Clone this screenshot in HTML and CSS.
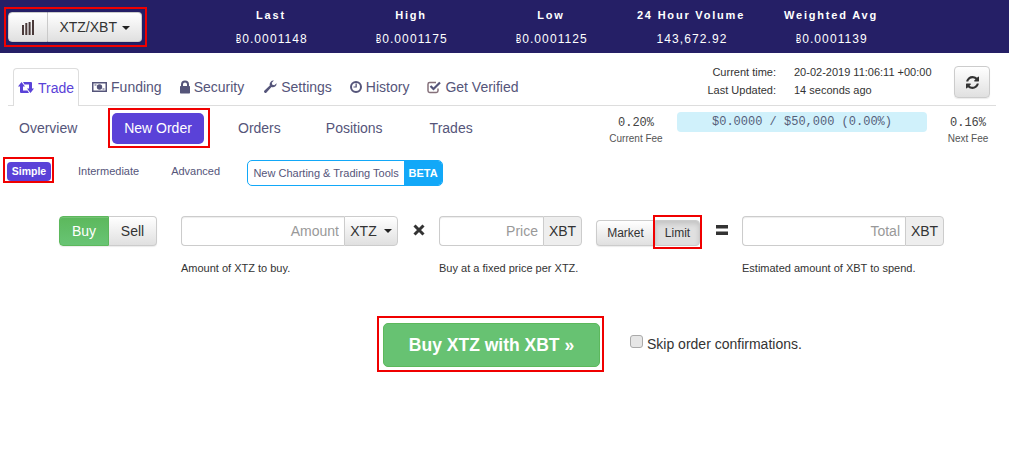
FILE: index.html
```html
<!DOCTYPE html>
<html lang="en">
<head>
  <meta charset="UTF-8" />
  <title>XTZ/XBT Trade</title>
  <link rel="stylesheet" href="styles.css">
</head>
<body>
  <header class="topbar">
    <div class="marked pair-mark">
      <div class="pair-group">
        <button class="btn pair-chart">
          <svg width="12" height="15" viewBox="0 0 12 15"><path d="M0 5h2v10H0zM3.300 3h2v12h-2zM6.600 2h2v13h-2zM10 0h2v15h-2z" fill="#4a3a3a"/></svg>
        </button>
        <button class="btn pair-name">XTZ/XBT <span class="caret"></span></button>
      </div>
    </div>
    <div class="ticker">
      <div class="tick"><div class="tick-label">Last</div><div class="tick-value"><span class="btc">Ƀ</span>0.0001148</div></div>
      <div class="tick"><div class="tick-label">High</div><div class="tick-value"><span class="btc">Ƀ</span>0.0001175</div></div>
      <div class="tick"><div class="tick-label">Low</div><div class="tick-value"><span class="btc">Ƀ</span>0.0001125</div></div>
      <div class="tick"><div class="tick-label">24 Hour Volume</div><div class="tick-value">143,672.92</div></div>
      <div class="tick"><div class="tick-label">Weighted Avg</div><div class="tick-value"><span class="btc">Ƀ</span>0.0001139</div></div>
    </div>
  </header>

  <div class="tabs">
    <a class="tab active">
      <svg width="16" height="13" viewBox="0 0 16 13"><path d="M0 5.500L3.500 1 7 5.500H5v4h4.500l1.500 2.500H3a1 1 0 0 1-1-1V5.500zM16 7.500L12.500 12 9 7.500h2v-4H6.500L5 1h8a1 1 0 0 1 1 1v5.500z" fill="#5a42d8"/></svg>
      Trade
    </a>
    <a class="tab">
      <svg width="15" height="14" viewBox="0 0 15 14"><path fill-rule="evenodd" d="M0 2h15v10H0zM1.500 3.500v7h12v-7zM7.500 4.300a2.700 2.700 0 1 1 0 5.400 2.700 2.700 0 0 1 0-5.400z" fill="#55557a"/><path d="M2.500 4.500h2v1h-2zM10.500 8.500h2v1h-2z" fill="#55557a"/></svg>
      Funding
    </a>
    <a class="tab security">
      <svg width="10" height="14" viewBox="0 0 10 14"><path fill-rule="evenodd" d="M1 6V4.500a4 4 0 0 1 8 0V6h.300a.7.700 0 0 1 .7.700v6a.7.700 0 0 1-.7.700H.700a.7.700 0 0 1-.7-.7v-6A.7.700 0 0 1 .700 6zM3 6h4V4.500a2 2 0 0 0-4 0z" fill="#55557a"/></svg>
      Security
    </a>
    <a class="tab">
      <svg width="13" height="14" viewBox="0 0 13 14"><path d="M12.600 3.200a3.800 3.800 0 0 1-5.100 3.900l-5 5.500a1.400 1.400 0 0 1-2-2l5.300-5.200A3.800 3.800 0 0 1 9.900.600L7.800 2.800l.5 2 2 .5z" fill="#55557a"/></svg>
      Settings
    </a>
    <a class="tab">
      <svg width="12" height="14" viewBox="0 0 12 14"><circle cx="6" cy="7" r="5" fill="none" stroke="#55557a" stroke-width="2"/><path d="M5.500 3.500h1.300v4H3.500V6.500h2z" fill="#55557a"/></svg>
      History
    </a>
    <a class="tab">
      <svg width="14" height="14" viewBox="0 0 14 14"><path d="M11 8.500v2.300A1.700 1.700 0 0 1 9.300 12.500H2.700A1.700 1.700 0 0 1 1 10.800V4.200A1.700 1.700 0 0 1 2.700 2.500H9" fill="none" stroke="#85707a" stroke-width="1.500"/><path d="M3.500 6l3 3 6.500-6.500" fill="none" stroke="#55557a" stroke-width="2.200"/></svg>
      Get Verified
    </a>
    <div class="clock">
      <div class="clock-names"><div>Current time:</div><div>Last Updated:</div></div>
      <div class="clock-values"><div>20-02-2019 11:06:11 +00:00</div><div>14 seconds ago</div></div>
    </div>
    <button class="btn refresh">
      <svg width="13" height="13" viewBox="128 128 1536 1536"><path d="M1639 1056q0 5-1 7-64 268-268 434.500t-478 166.500q-146 0-282.500-55t-243.500-157l-129 129q-19 19-45 19t-45-19-19-45v-448q0-26 19-45t45-19h448q26 0 45 19t19 45-19 45l-137 137q71 66 161 102t187 36q134 0 250-65t186-179q11-17 53-117 8-23 30-23h192q13 0 22.500 9.500t9.500 22.500zm25-800v448q0 26-19 45t-45 19h-448q-26 0-45-19t-19-45 19-45l138-138q-148-137-349-137-134 0-250 65t-186 179q-11 17-53 117-8 23-30 23h-199q-13 0-22.500-9.500t-9.500-22.500v-7q65-268 270-434.500t480-166.500q146 0 284 55.500t245 156.500l130-129q19-19 45-19t45 19 19 45z" fill="#333"/></svg>
    </button>
  </div>

  <div class="subnav">
    <a class="subnav-item overview">Overview</a>
    <div class="marked order-mark"><a class="pill">New Order</a></div>
    <a class="subnav-item orders">Orders</a>
    <a class="subnav-item positions">Positions</a>
    <a class="subnav-item trades">Trades</a>
    <div class="fees">
      <div class="fee"><div class="fee-rate">0.20%</div><div class="fee-name">Current Fee</div></div>
      <div class="fee-bar">$0.0000 / $50,000 (0.00%)</div>
      <div class="fee"><div class="fee-rate">0.16%</div><div class="fee-name">Next Fee</div></div>
    </div>
  </div>

  <div class="modes">
    <div class="marked simple-mark"><a class="mode-pill">Simple</a></div>
    <a class="mode intermediate">Intermediate</a>
    <a class="mode advanced">Advanced</a>
    <a class="beta-link"><span class="beta-text">New Charting &amp; Trading Tools</span><span class="beta-tag">BETA</span></a>
  </div>

  <form class="order-form">
    <div class="side-group">
      <button type="button" class="btn buy">Buy</button>
      <button type="button" class="btn sell">Sell</button>
    </div>
    <div class="field amount-field">
      <div class="input-group">
        <input class="input" placeholder="Amount">
        <span class="addon addon-select">XTZ <span class="caret"></span></span>
      </div>
      <p class="hint">Amount of XTZ to buy.</p>
    </div>
    <div class="operator">
      <svg width="12" height="12" viewBox="0 0 12 12"><path d="M1.500 1.500l9 9M10.500 1.500l-9 9" stroke="#333" stroke-width="3"/></svg>
    </div>
    <div class="field price-field">
      <div class="input-group">
        <input class="input" placeholder="Price">
        <span class="addon">XBT</span>
      </div>
      <p class="hint">Buy at a fixed price per XTZ.</p>
    </div>
    <div class="type-group">
      <button type="button" class="btn market">Market</button>
      <div class="marked limit-mark"><button type="button" class="btn limit">Limit</button></div>
    </div>
    <div class="operator equals">
      <svg width="12" height="12" viewBox="0 0 12 12"><path d="M0 1h12v3.500H0zM0 7.500h12V11H0z" fill="#333"/></svg>
    </div>
    <div class="field total-field">
      <div class="input-group">
        <input class="input" placeholder="Total">
        <span class="addon">XBT</span>
      </div>
      <p class="hint">Estimated amount of XBT to spend.</p>
    </div>
  </form>

  <div class="submit-row">
    <div class="marked submit-mark"><button type="button" class="submit">Buy XTZ with XBT »</button></div>
    <label class="skip"><input type="checkbox"> Skip order confirmations.</label>
  </div>
</body>
</html>
```

FILE: styles.css
```css
* {
  box-sizing: border-box;
}

body {
  margin: 0;
  font-family: "Liberation Sans", Arial, sans-serif;
  font-size: 14px;
  color: #333;
  background: #fff;
}

button, input {
  font-family: inherit;
}

.marked {
  border: 2px solid #f00000;
}

.btn {
  border: 1px solid #ccc;
  color: #333;
  font-size: 14px;
  background: linear-gradient(#fff, #e0e0e0);
  box-shadow: inset 0 1px 0 rgba(255,255,255,.15), 0 1px 1px rgba(0,0,0,.08);
  padding: 0;
}

.caret {
  display: inline-block;
  width: 0;
  height: 0;
  margin-left: 1px;
  vertical-align: middle;
  border-top: 4px solid #222;
  border-left: 4px solid transparent;
  border-right: 4px solid transparent;
}

/* top bar */
.topbar {
  display: flex;
  height: 53px;
  background: #251f66;
  padding: 7px 0 0 4px;
}

.pair-mark {
  width: 143px;
  height: 40px;
  padding: 3px 3px 3px 2px;
}

.pair-group {
  display: flex;
  width: 134px;
  height: 30px;
}

.pair-chart {
  width: 40px;
  border-radius: 4px 0 0 4px;
  display: flex;
  align-items: center;
  justify-content: center;
}

.pair-name {
  flex: 1;
  border-left: 0;
  border-radius: 0 4px 4px 0;
  font-size: 14px;
}

.ticker {
  display: flex;
  margin-left: 54px;
}

.tick {
  width: 140px;
  text-align: center;
  color: #fff;
}

.tick-label {
  font-size: 11px;
  font-weight: bold;
  letter-spacing: 1.8px;
  margin-top: 1px;
  line-height: 14px;
}

.tick-value {
  font-size: 12px;
  letter-spacing: 1.1px;
  margin-top: 10px;
  padding-left: 2px;
  line-height: 14px;
}

.btc {
  display: inline-block;
  width: 6px;
  transform: scaleX(.65);
  transform-origin: left;
}

/* main tabs */
.tabs {
  display: flex;
  align-items: flex-start;
  height: 53px;
  padding: 15px 0 0 8px;
  position: relative;
}

.tabs::after {
  content: "";
  position: absolute;
  left: 8px;
  width: 988px;
  top: 52px;
  border-bottom: 1px solid #ddd;
}

.tab {
  display: flex;
  align-items: center;
  gap: 4px;
  height: 38px;
  padding: 0 5px 0 5px;
  margin-right: 8px;
  color: #55557a;
}

.tab.security {
  margin-right: 10px;
}

.tab.active {
  margin-left: 5px;
  color: #5a42d8;
  border: 1px solid #ddd;
  border-bottom: 0;
  border-radius: 4px 4px 0 0;
  background: #fff;
  position: relative;
  z-index: 1;
  padding: 0 4px 0 4px;
}

.clock {
  display: flex;
  gap: 18px;
  margin-left: auto;
  font-size: 11px;
  line-height: 18px;
  color: #333;
  margin-top: -5px;
}

.clock-names {
  text-align: right;
}

.clock-values {
  width: 137px;
  white-space: nowrap;
}

.refresh {
  width: 36px;
  height: 32px;
  margin: -2px 19px 0 23px;
  border-radius: 4px;
  display: flex;
  align-items: center;
  justify-content: center;
}

/* order sub nav */
.subnav {
  display: flex;
  align-items: flex-start;
  height: 51px;
  padding: 2px 11px 0 19px;
}

.subnav-item {
  font-size: 14px;
  color: #55557a;
  line-height: 41px;
}

.overview {
  width: 89px;
}

.order-mark {
  width: 102px;
  height: 40px;
  padding: 3px 2px;
}

.pill {
  display: block;
  height: 31px;
  line-height: 31px;
  width: 92px;
  text-align: center;
  border-radius: 5px;
  background: #5a42d8;
  color: #fff;
}

.orders {
  margin-left: 28px;
}

.positions {
  margin-left: 45px;
}

.trades {
  margin-left: 47px;
}

.fees {
  display: flex;
  align-items: flex-start;
  margin-left: auto;
}

.fee {
  width: 60px;
  text-align: center;
  margin-top: 8px;
}

.fee-rate {
  font-family: "Liberation Mono", monospace;
  font-size: 12px;
  line-height: 15px;
  color: #444;
}

.fee-name {
  font-size: 10px;
  line-height: 14px;
  color: #555;
  margin-top: 1px;
}

.fee-bar {
  width: 250px;
  height: 20px;
  margin: 4px 11px 0 11px;
  background: #d0f1fb;
  border-radius: 4px;
  font-family: "Liberation Mono", monospace;
  font-size: 12px;
  line-height: 21px;
  text-align: center;
  color: #55607a;
}

/* simple / intermediate / advanced */
.modes {
  display: flex;
  align-items: center;
  height: 29px;
  padding-left: 3px;
}

.simple-mark {
  width: 51px;
  height: 26px;
  margin-top: -4px;
  padding: 3px 3px 3px 2px;
}

.mode-pill {
  display: block;
  width: 44px;
  height: 19px;
  line-height: 19px;
  text-align: center;
  font-size: 10.500px;
  font-weight: bold;
  color: #fff;
  background: #5a42d8;
  border-radius: 4px;
}

.mode {
  font-size: 11px;
  color: #55557a;
  margin-top: -2px;
}

.intermediate {
  margin-left: 24px;
}

.advanced {
  margin-left: 32px;
}

.beta-link {
  display: flex;
  margin-left: 27px;
  margin-top: 3px;
  height: 26px;
  width: 196px;
  border: 1px solid #12a8f8;
  border-radius: 5px;
  overflow: hidden;
  line-height: 24px;
  font-size: 11px;
  color: #55557a;
}

.beta-text {
  flex: 1;
  text-align: center;
  white-space: nowrap;
}

.beta-tag {
  width: 38px;
  text-align: center;
  background: #12a8f8;
  color: #fff;
  font-weight: bold;
  font-size: 11px;
}

/* order form */
.order-form {
  display: flex;
  align-items: flex-start;
  padding: 30px 0 0 59px;
}

.side-group {
  display: flex;
  width: 98px;
  height: 30px;
}

.buy {
  width: 50px;
  border: 1px solid #5cb85c;
  border-radius: 4px 0 0 4px;
  background: linear-gradient(#5cb85c, #68c474);
  color: #fff;
}

.sell {
  flex: 1;
  border-left: 0;
  border-radius: 0 4px 4px 0;
}

.field {
  display: flex;
  flex-direction: column;
}

.amount-field {
  width: 217px;
  margin-left: 24px;
}

.price-field {
  width: 143px;
}

.total-field {
  width: 202px;
}

.input-group {
  display: flex;
  height: 30px;
}

.input {
  flex: 1;
  min-width: 0;
  border: 1px solid #ccc;
  border-right: 0;
  border-radius: 4px 0 0 4px;
  padding: 0 5px;
  text-align: right;
  font-size: 14px;
  box-shadow: inset 0 1px 1px rgba(0,0,0,.075);
}

.input::placeholder {
  color: #999;
}

.addon {
  display: flex;
  align-items: center;
  justify-content: center;
  width: 39px;
  background: #eee;
  border: 1px solid #ccc;
  border-radius: 0 4px 4px 0;
  color: #333;
}

.addon-select {
  width: 54px;
  gap: 6px;
  background: linear-gradient(#fff, #e0e0e0);
}

.hint {
  margin: 16px 0 0;
  font-size: 11px;
  line-height: 13px;
  color: #333;
  white-space: nowrap;
}

.operator {
  width: 41px;
  height: 30px;
  display: flex;
  align-items: center;
  justify-content: center;
  padding-bottom: 3px;
}

.type-group {
  display: flex;
  align-items: center;
  height: 34px;
  margin: -1px 0 0 14px;
}

.market {
  width: 58px;
  height: 26px;
  margin-top: 2px;
  font-size: 12px;
  border-right: 0;
  border-radius: 4px 0 0 4px;
}

.limit-mark {
  width: 49px;
  height: 34px;
  margin-left: -1px;
  padding: 3px 0 2px;
}

.limit {
  display: block;
  width: 45px;
  height: 26px;
  font-size: 12px;
  border-radius: 0 4px 4px 0;
  background: #e0e0e0;
  box-shadow: inset 0 3px 5px rgba(0,0,0,.125);
}

.equals {
  width: 40px;
}

/* submit */
.submit-row {
  display: flex;
  align-items: flex-start;
  padding: 41px 0 0 377px;
}

.submit-mark {
  width: 227px;
  height: 56px;
  padding: 5px 2px 3px 4px;
}

.submit {
  display: block;
  width: 217px;
  height: 44px;
  border: 1px solid #5cb85c;
  border-radius: 5px;
  background: #67c272;
  color: #fff;
  font-size: 17.500px;
  font-weight: bold;
}

.skip {
  display: flex;
  align-items: center;
  gap: 4px;
  margin: 19px 0 0 26px;
  color: #333;
}

.skip input {
  appearance: none;
  width: 13px;
  height: 13px;
  margin: 0 0 4px;
  background: #e6e6e6;
  border: 1px solid #aaa;
  border-radius: 3px;
}
```
